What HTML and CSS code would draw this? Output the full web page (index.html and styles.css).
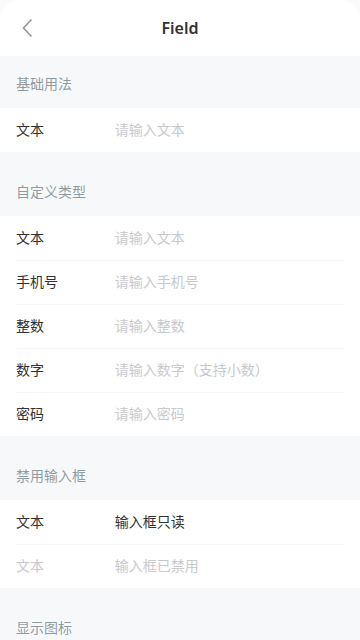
FILE: index.html
```html
<!DOCTYPE html>
<html lang="zh-CN">
<head>
<meta charset="utf-8">
<meta name="viewport" content="width=device-width, initial-scale=1">
<title>Field</title>
<link rel="stylesheet" href="styles.css">
</head>
<body>
<div class="app">
  <header class="nav">
    <span class="nav-back">
      <svg width="12" height="20" viewBox="0 0 12 20"><path d="M10.5 1.5 L2.5 10 L10.5 18.5" fill="none" stroke="#969799" stroke-width="1.6"/></svg>
    </span>
    <h1 class="nav-title">Field</h1>
  </header>

  <h2 class="block-title first">基础用法</h2>
  <div class="group">
    <div class="cell"><span class="label">文本</span><span class="value placeholder">请输入文本</span></div>
  </div>

  <h2 class="block-title">自定义类型</h2>
  <div class="group">
    <div class="cell"><span class="label">文本</span><span class="value placeholder">请输入文本</span></div>
    <div class="cell"><span class="label">手机号</span><span class="value placeholder">请输入手机号</span></div>
    <div class="cell"><span class="label">整数</span><span class="value placeholder">请输入整数</span></div>
    <div class="cell"><span class="label">数字</span><span class="value placeholder">请输入数字（支持小数）</span></div>
    <div class="cell"><span class="label">密码</span><span class="value placeholder">请输入密码</span></div>
  </div>

  <h2 class="block-title">禁用输入框</h2>
  <div class="group">
    <div class="cell"><span class="label">文本</span><span class="value">输入框只读</span></div>
    <div class="cell disabled"><span class="label">文本</span><span class="value">输入框已禁用</span></div>
  </div>

  <h2 class="block-title">显示图标</h2>
</div>
</body>
</html>
```

FILE: styles.css
```css
* { box-sizing: border-box; }
html, body { margin: 0; padding: 0; }
body {
  background: #fbfbfc;
  font-family: "Noto Sans", "Noto Sans CJK SC", sans-serif;
  -webkit-font-smoothing: antialiased;
}
.app {
  width: 360px;
  min-height: 660px;
  background: #f7f8fa;
  border-radius: 20px;
  overflow: hidden;
}
.nav {
  height: 56px;
  background: #fff;
  display: flex;
  align-items: center;
  justify-content: center;
  position: relative;
}
.nav-back {
  position: absolute;
  left: 21px;
  top: 18px;
  display: flex;
}
.nav-title {
  margin: 0;
  font-size: 16px;
  font-weight: 600;
  color: #323233;
  line-height: 24px;
}
.block-title {
  margin: 0;
  padding: 32px 16px 16px;
  font-size: 14px;
  font-weight: 400;
  line-height: 16px;
  color: rgba(69, 90, 100, 0.6);
}
.block-title.first { padding-top: 20px; }
.group { background: #fff; }
.cell {
  display: flex;
  align-items: center;
  height: 44px;
  padding: 10px 16px;
  font-size: 14px;
  line-height: 24px;
  color: #323233;
  position: relative;
}
.cell + .cell::after {
  content: "";
  position: absolute;
  left: 16px;
  right: 16px;
  top: 0;
  border-top: 1px solid #ebedf0;
  transform: scaleY(0.5);
  transform-origin: top;
}
.label {
  width: 6.2em;
  margin-right: 12px;
  flex: none;
}
.value { flex: 1; color: #323233; }
.placeholder { color: #c8c9cc; }
.disabled .label, .disabled .value { color: #c8c9cc; }
```
